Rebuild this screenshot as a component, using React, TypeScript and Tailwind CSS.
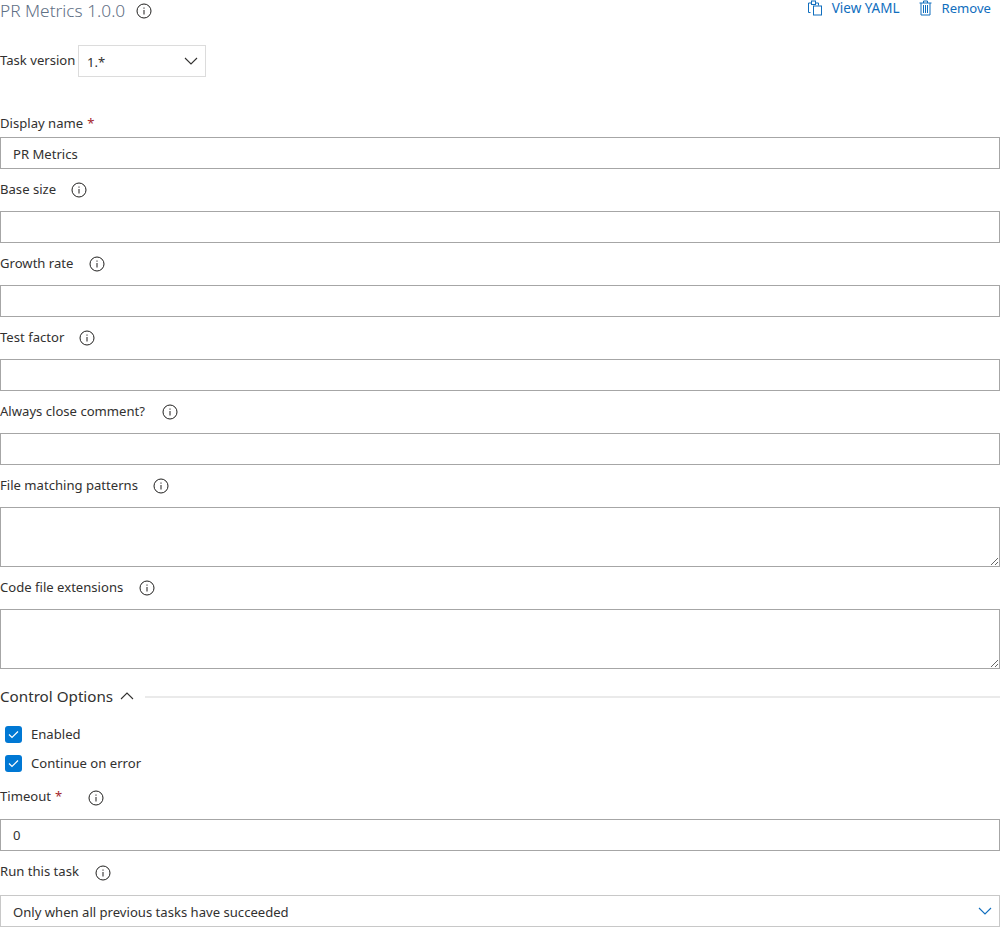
const font = { fontFamily: '"Noto Sans", sans-serif' };

function Info() {
  return (
    <svg width="16" height="16" viewBox="0 0 16 16" fill="none" className="shrink-0">
      <circle cx="8" cy="8" r="7" stroke="#201f1e" strokeWidth="1" />
      <rect x="7.5" y="7" width="1" height="4.5" fill="#201f1e" />
      <rect x="7.5" y="4.5" width="1" height="1.2" fill="#201f1e" />
    </svg>
  );
}

function Chevron({ color = "#323130", up = false }: { color?: string; up?: boolean }) {
  return (
    <svg width="14" height="8" viewBox="0 0 14 8" fill="none" className="shrink-0">
      <path d={up ? "M1 7 L7 1 L13 7" : "M1 1 L7 7 L13 1"} stroke={color} strokeWidth="1.1" />
    </svg>
  );
}

function Check() {
  return (
    <span className="flex h-[17px] w-[17px] items-center justify-center rounded-[3px] bg-[#0078d4]">
      <svg width="11" height="9" viewBox="0 0 11 9" fill="none">
        <path d="M1 4.5 L4 7.5 L10 1.5" stroke="#fff" strokeWidth="1.2" />
      </svg>
    </span>
  );
}

function Label({ text, gap = 16 }: { text: string; gap?: number }) {
  return (
    <div className="flex h-[42px] items-center text-[13.1px] text-[#323130]">
      <span>{text}</span>
      <span style={{ marginLeft: gap }}>
        <Info />
      </span>
    </div>
  );
}

function TextInput({ value = "", shifted = false }: { value?: string; shifted?: boolean }) {
  return (
    <input
      readOnly
      value={value}
      className={
        shifted
          ? "block h-[32px] w-full border border-[#a6a6a6] bg-white px-[12px] pt-[2px] text-[13.1px] text-[#323130] outline-none"
          : "block h-[32px] w-full border border-[#a6a6a6] bg-white px-[12px] text-[13.1px] text-[#323130] outline-none"
      }
    />
  );
}

function Area() {
  return <textarea readOnly className="block h-[60px] w-full resize-y border border-[#a6a6a6] bg-white outline-none" />;
}

export default function App() {
  return (
    <div style={font} className="h-[927px] w-[1000px] overflow-hidden bg-white text-[#323130]">
      <div className="flex h-[23px] items-start justify-between">
        <div className="flex items-center">
          <span className="text-[17.3px] leading-[22px] font-light text-[#5f7085]">PR Metrics 1.0.0</span>
          <span className="ml-[11px]"><Info /></span>
        </div>
        <div className="flex items-center pr-[9px] text-[13.1px] leading-[16px] text-[#106ebe]">
          <svg width="16" height="16" viewBox="0 0 16 16" fill="none" className="mr-[9px]">
            <path d="M3.5 12.5 H1.5 V3 H4 M9 3 H11.5 V5.5" stroke="#106ebe" />
            <rect x="4.5" y="1" width="4" height="3.5" stroke="#106ebe" />
            <rect x="6.5" y="6" width="8" height="9" stroke="#106ebe" />
          </svg>
          <span className="text-[13.5px]">View YAML</span>
          <svg width="16" height="16" viewBox="0 0 16 16" fill="none" className="ml-[18px] mr-[8px]">
            <path d="M1.5 3 H13.5 M5.5 3 V1 H9.5 V3 M3 3 V15 H12 V3" stroke="#106ebe" />
            <path d="M5.5 5 V13 M7.5 5 V13 M9.5 5 V13" stroke="#106ebe" />
          </svg>
          <span>Remove</span>
        </div>
      </div>

      <div className="mt-[22px] flex items-center text-[13.1px]">
        <span className="w-[78px]">Task version</span>
        <div className="flex h-[32px] w-[128px] items-center justify-between border border-[#dcdcdc] pl-[8px] pr-[7px]">
          <span className="pt-[3px]">1.*</span>
          <Chevron />
        </div>
      </div>

      <div className="mt-[37px] flex h-[23px] items-center pb-[3px] text-[13.1px]">
        <span>Display name</span>
        <span className="ml-1 text-[#a4262c]">*</span>
      </div>
      <TextInput value="PR Metrics" shifted />

      <Label text="Base size" gap={15} />
      <TextInput />
      <Label text="Growth rate" gap={16} />
      <TextInput />
      <Label text="Test factor" gap={15} />
      <TextInput />
      <Label text="Always close comment?" gap={17} />
      <TextInput />
      <Label text="File matching patterns" gap={15} />
      <Area />
      <Label text="Code file extensions" gap={16} />
      <Area />

      <div className="mt-[14px] flex h-[26px] items-center">
        <span className="text-[15.2px]">Control Options</span>
        <span className="ml-[7px]"><Chevron up /></span>
        <div className="ml-[11px] mt-[2px] h-[2px] flex-1 bg-[#eaeaea]" />
      </div>

      <div className="mt-[13px] flex h-[24px] items-center pl-[5px] text-[13.1px]">
        <Check />
        <span className="ml-[9px] pt-[2px]">Enabled</span>
      </div>
      <div className="mt-[5px] flex h-[24px] items-center pl-[5px] text-[13.1px]">
        <Check />
        <span className="ml-[9px] pt-[2px]">Continue on error</span>
      </div>

      <div className="mt-[2px] flex h-[39px] items-center text-[13.1px]">
        <span>Timeout</span>
        <span className="ml-1 text-[#a4262c]">*</span>
        <span className="ml-[26px] pt-[2px]"><Info /></span>
      </div>
      <div className="mt-[3px]"><TextInput value="0" /></div>

      <div className="flex h-[44px] items-center pb-[2px] text-[13.1px]">
        <span>Run this task</span>
        <span className="ml-[16px] pt-[2px]"><Info /></span>
      </div>
      <div className="flex h-[32px] items-center justify-between border border-[#c8c8c8] pl-[12px] pr-[7px] text-[13.1px]">
        <span className="pt-[3px]">Only when all previous tasks have succeeded</span>
        <Chevron color="#106ebe" />
      </div>
    </div>
  );
}
